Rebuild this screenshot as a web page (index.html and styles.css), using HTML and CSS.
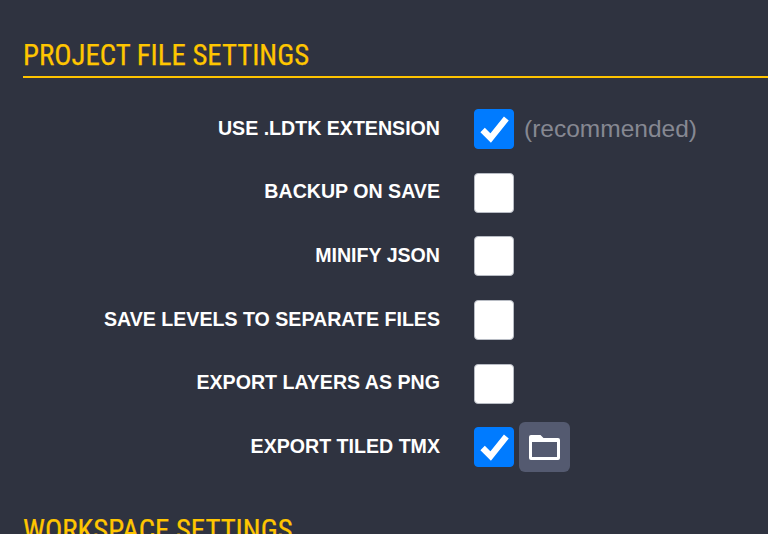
FILE: index.html
```html
<!DOCTYPE html>
<html lang="en">
<head>
<meta charset="utf-8">
<title>Project settings</title>
<link rel="stylesheet" href="styles.css">
</head>
<body>
<main class="page">
  <h2 class="section-title">Project file settings</h2>
  <div class="rows">
    <div class="row"><span class="label">Use .ldtk extension</span><div class="controls"><span class="box checked"><svg class="check" viewBox="0 0 40 40"><path d="M8 21l8.500 8.500L33 9"/></svg></span><span class="hint">(recommended)</span></div></div>
    <div class="row"><span class="label">Backup on save</span><div class="controls"><span class="box"></span></div></div>
    <div class="row"><span class="label">Minify JSON</span><div class="controls"><span class="box"></span></div></div>
    <div class="row"><span class="label">Save levels to separate files</span><div class="controls"><span class="box"></span></div></div>
    <div class="row"><span class="label">Export layers as PNG</span><div class="controls"><span class="box"></span></div></div>
    <div class="row"><span class="label">Export Tiled TMX</span><div class="controls"><span class="box checked"><svg class="check" viewBox="0 0 40 40"><path d="M8 21l8.500 8.500L33 9"/></svg></span><button class="folder" type="button"><svg viewBox="0 0 31 25"><path fill-rule="evenodd" d="M2 0h9.500l3 3H29a2 2 0 0 1 2 2v18a2 2 0 0 1-2 2H2a2 2 0 0 1-2-2V2a2 2 0 0 1 2-2zM3 7v15h25V7z"/></svg></button></div></div>
  </div>
  <h2 class="section-title next">Workspace settings</h2>
</main>
</body>
</html>
```
FILE: styles.css
```css
html, body {
  margin: 0;
  height: 100%;
  overflow: hidden;
  background: #2f3340;
}
.page {
  padding: 38px 0 0 23px;
}
.section-title {
  margin: 0;
  height: 38px;
  line-height: 34px;
  box-sizing: content-box;
  border-bottom: 2px solid #ffc400;
  color: #ffc600;
  -webkit-text-stroke: 0.25px #ffc600;
  font-family: "Roboto Condensed", Roboto, sans-serif;
  font-stretch: 75%;
  font-size: 28.8px;
  font-weight: 400;
  text-transform: uppercase;
}
.section-title.next {
  border-bottom: 0;
  margin-top: 46px;
}
.rows {
  display: flex;
  flex-direction: column;
  gap: 23.7px;
  margin-top: 31px;
}
.row {
  display: grid;
  grid-template-columns: 417px 1fr;
  column-gap: 34px;
  align-items: center;
  height: 40px;
}
.label {
  padding-bottom: 2px;
  text-align: right;
  color: #fff;
  font-family: "Liberation Sans", Arial, sans-serif;
  font-size: 19.6px;
  font-weight: 700;
  text-transform: uppercase;
  white-space: nowrap;
}
.controls {
  display: flex;
  align-items: center;
  gap: 5px;
}
.box {
  width: 40px;
  height: 40px;
  box-sizing: border-box;
  border: 1px solid #b8bcc4;
  border-radius: 4px;
  background: #fff;
  display: block;
}
.box.checked {
  background: #007bff;
  border-color: #007bff;
}
.check {
  display: block;
  width: 38px;
  height: 38px;
  fill: none;
  stroke: #fff;
  stroke-width: 6.5px;
}
.hint {
  margin-left: 5px;
  color: #868892;
  font-family: "Liberation Sans", Arial, sans-serif;
  font-size: 24.5px;
}
.folder {
  width: 51px;
  height: 50px;
  margin: -5px 0;
  padding: 0;
  border: 0;
  border-radius: 6px;
  background: #545a70;
  display: flex;
  align-items: center;
  justify-content: center;
}
.folder svg {
  width: 31px;
  height: 25px;
  fill: #fff;
}
```
